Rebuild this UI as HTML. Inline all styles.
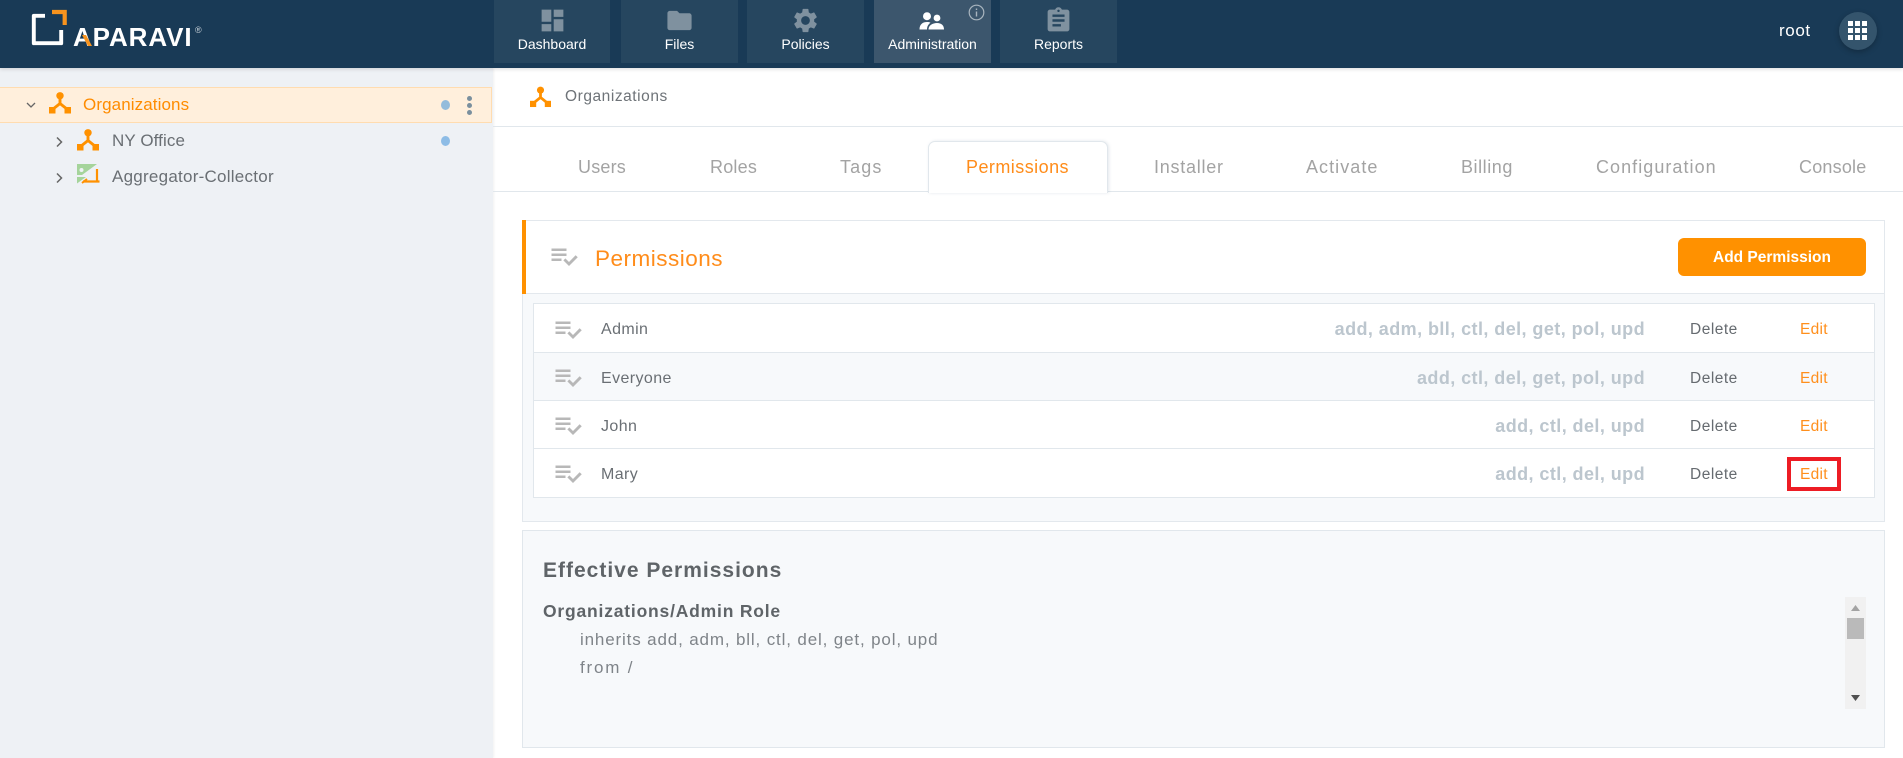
<!DOCTYPE html>
<html lang="en">
<head>
<meta charset="utf-8">
<title>Aparavi - Permissions</title>
<style>
html,body{margin:0;padding:0;width:1903px;height:758px;overflow:hidden;background:#fff;font-family:"Liberation Sans",sans-serif}
*{box-sizing:border-box}
.a{position:absolute}
.t{position:absolute;white-space:nowrap;line-height:20px;height:20px}
svg{position:absolute;display:block}
.nav{position:absolute;top:0;height:63px;background:#26465f}
.nl{position:absolute;left:0;right:0;top:34px;text-align:center;color:#fff;font-size:14px;line-height:20px}
.tab{font-size:18px;color:#a3a3a3;top:157px;letter-spacing:.2px}
.name{font-size:16px;color:#6a6f74;left:601px;letter-spacing:.4px}
.perm{font-size:18px;color:#bcc6ce;right:258px;font-weight:bold;letter-spacing:.43px}
.del{font-size:15.5px;color:#666b70;left:1690px;letter-spacing:.5px}
.edit{font-size:15.5px;color:#ff8f1c;left:1800px;letter-spacing:.3px}
</style>
</head>
<body>
<svg width="0" height="0" style="position:absolute">
<defs>
<symbol id="org" viewBox="0 0 22 22">
<circle cx="11" cy="3.800" r="3.700" fill="#ff9100"/>
<path d="M11 5v6.500M11 11.500L3.500 17.500M11 11.500L18.500 17.500" stroke="#ff9100" stroke-width="2.900" fill="none"/>
<rect x="0" y="15" width="6.500" height="6.500" fill="#ff9100"/>
<rect x="15.500" y="15" width="6.500" height="6.500" fill="#ff9100"/>
</symbol>
<symbol id="chk" viewBox="0 0 24 24">
<path fill="#b8b8b8" d="M14 10H2v2h12v-2zm0-4H2v2h12V6zM2 16h8v-2H2v2zM21.300 11.400L23 13l-7 7-4.500-4.500 1.600-1.600 2.900 2.900z"/>
</symbol>
</defs>
</svg>

<!-- header -->
<div class="a" style="left:0;top:0;width:1903px;height:68px;background:#193a56;z-index:3;box-shadow:0 1px 4px rgba(0,0,0,.15)">
  <svg style="left:30px;top:8px" width="40" height="40" viewBox="0 0 40 40">
    <path d="M15 7.800H3.800V35.200H31.200V22" fill="none" stroke="#fff" stroke-width="3.900" stroke-linejoin="round"/>
    <path d="M22 4H34.700V17" fill="none" stroke="#f7931e" stroke-width="4.200"/>
  </svg>
  <div class="t" style="left:73px;top:24px;height:26px;line-height:26px;font-size:26px;color:#fff;letter-spacing:.9px;font-weight:bold">APARAVI</div>
  <svg style="left:78px;top:35px" width="16" height="11" viewBox="0 0 16 11"><path d="M4 0L10 11H14L8 0z" fill="#f7931e"/></svg>
  <div class="t" style="left:195px;top:20px;font-size:9px;color:#c9d2d9">®</div>

  <div class="nav" style="left:494px;width:116px">
    <svg style="left:44px;top:5.500px" width="29" height="29" viewBox="0 0 24 24"><path fill="#7f919f" d="M3 13h8V3H3v10zm0 8h8v-6H3v6zm10 0h8V11h-8v10zm0-18v6h8V3h-8z"/></svg>
    <div class="nl">Dashboard</div>
  </div>
  <div class="nav" style="left:621px;width:117px">
    <svg style="left:44px;top:5.500px" width="29" height="29" viewBox="0 0 24 24"><path fill="#7f919f" d="M10 4H4c-1.100 0-1.990.9-1.990 2L2 18c0 1.100.9 2 2 2h16c1.100 0 2-.9 2-2V8c0-1.100-.9-2-2-2h-8l-2-2z"/></svg>
    <div class="nl">Files</div>
  </div>
  <div class="nav" style="left:747px;width:117px">
    <svg style="left:44px;top:5.500px" width="29" height="29" viewBox="0 0 24 24"><path fill="#7f919f" d="M19.140 12.940c.04-.3.06-.61.06-.94 0-.32-.02-.64-.07-.94l2.030-1.580c.18-.14.23-.41.12-.61l-1.920-3.320c-.12-.22-.37-.29-.59-.22l-2.390.96c-.5-.38-1.030-.7-1.620-.94l-.36-2.540c-.04-.24-.24-.41-.48-.41h-3.840c-.24 0-.43.17-.47.41l-.36 2.540c-.59.24-1.130.57-1.620.94l-2.390-.96c-.22-.08-.47 0-.59.22L2.740 8.870c-.12.21-.08.47.12.61l2.030 1.580c-.05.3-.09.63-.09.94s.02.64.07.94l-2.030 1.580c-.18.14-.23.41-.12.61l1.920 3.320c.12.22.37.29.59.22l2.390-.96c.5.38 1.030.7 1.620.94l.36 2.540c.05.24.24.41.48.41h3.840c.24 0 .44-.17.47-.41l.36-2.540c.59-.24 1.130-.56 1.620-.94l2.390.96c.22.08.47 0 .59-.22l1.920-3.320c.12-.22.07-.47-.12-.61l-2.010-1.580zM12 15.600c-1.980 0-3.600-1.620-3.600-3.600s1.620-3.600 3.600-3.600 3.600 1.620 3.600 3.600-1.620 3.600-3.600 3.600z"/></svg>
    <div class="nl">Policies</div>
  </div>
  <div class="nav" style="left:874px;width:117px;background:#3c566d">
    <svg style="left:45px;top:12px" width="26" height="18" viewBox="0 0 26 18">
      <circle cx="8" cy="4.200" r="4" fill="#fff"/>
      <circle cx="18" cy="6" r="3.400" fill="#fff"/>
      <path d="M.5 17.500C.5 12 4 10 8 10c1.500 0 2.500.2 3.500.8C9 12.500 8 15 8 17.500z" fill="#fff"/>
      <path d="M9.500 17.500c0-4 4-6.500 8.500-6.500s7 2.500 7 6.500z" fill="#fff"/>
    </svg>
    <svg style="left:94px;top:4px" width="17" height="17" viewBox="0 0 17 17">
      <circle cx="8.500" cy="8.500" r="7.300" fill="none" stroke="#a9b5bf" stroke-width="1.200"/>
      <rect x="7.800" y="7.500" width="1.400" height="5" fill="#a9b5bf"/>
      <rect x="7.800" y="4.500" width="1.400" height="1.500" fill="#a9b5bf"/>
    </svg>
    <div class="nl">Administration</div>
  </div>
  <div class="nav" style="left:1000px;width:117px">
    <svg style="left:44px;top:5.500px" width="29" height="29" viewBox="0 0 24 24"><path fill="#7f919f" d="M19 3h-4.180C14.400 1.840 13.300 1 12 1c-1.300 0-2.400.84-2.820 2H5c-1.100 0-2 .9-2 2v14c0 1.100.9 2 2 2h14c1.100 0 2-.9 2-2V5c0-1.100-.9-2-2-2zm-7 0c.55 0 1 .45 1 1s-.45 1-1 1-1-.45-1-1 .45-1 1-1zm2 14H7v-2h7v2zm3-4H7v-2h10v2zm0-4H7V7h10v2z"/></svg>
    <div class="nl">Reports</div>
  </div>

  <div class="t" style="left:1779px;top:21px;font-size:17px;color:#fff;letter-spacing:.6px">root</div>
  <div class="a" style="left:1839px;top:12px;width:38px;height:38px;border-radius:50%;background:#34546c;box-shadow:0 2px 6px rgba(0,0,0,.25)"></div>
  <svg style="left:1848px;top:21px" width="20" height="20" viewBox="0 0 20 20" fill="#fff">
    <rect x="0" y="0" width="5" height="5"/><rect x="7" y="0" width="5" height="5"/><rect x="14" y="0" width="5" height="5"/>
    <rect x="0" y="7" width="5" height="5"/><rect x="7" y="7" width="5" height="5"/><rect x="14" y="7" width="5" height="5"/>
    <rect x="0" y="14" width="5" height="5"/><rect x="7" y="14" width="5" height="5"/><rect x="14" y="14" width="5" height="5"/>
  </svg>
</div>

<!-- sidebar -->
<div class="a" style="left:0;top:68px;width:493px;height:690px;background:#eef1f5;box-shadow:1px 0 2px rgba(0,0,0,.06)"></div>
<div class="a" style="left:-2px;top:87px;width:494px;height:36px;background:#ffefdc;border:1px solid #ffdcb0"></div>
<svg style="left:26px;top:100px" width="10" height="10" viewBox="0 0 10 10"><path d="M1 3l4 4 4-4" fill="none" stroke="#666" stroke-width="1.300"/></svg>
<svg style="left:49px;top:92px" width="22" height="22"><use href="#org"/></svg>
<div class="t" style="left:83px;top:95px;font-size:17px;color:#ff8c00;letter-spacing:.1px">Organizations</div>
<div class="a" style="left:441px;top:100px;width:9px;height:10px;border-radius:50%;background:#94bcdb"></div>
<div class="a" style="left:467px;top:96px;width:5px;height:5px;border-radius:50%;background:#7a8f9e"></div>
<div class="a" style="left:467px;top:103px;width:5px;height:5px;border-radius:50%;background:#7a8f9e"></div>
<div class="a" style="left:467px;top:110px;width:5px;height:5px;border-radius:50%;background:#7a8f9e"></div>

<svg style="left:54px;top:136px" width="10" height="12" viewBox="0 0 10 12"><path d="M3 1.500l4.500 4.500L3 10.500" fill="none" stroke="#666" stroke-width="1.500"/></svg>
<svg style="left:77px;top:129px" width="22" height="22"><use href="#org"/></svg>
<div class="t" style="left:112px;top:131px;font-size:17px;color:#6a6f74;letter-spacing:.1px">NY Office</div>
<div class="a" style="left:441px;top:136px;width:9px;height:10px;border-radius:50%;background:#8dbce6"></div>

<svg style="left:54px;top:172px" width="10" height="12" viewBox="0 0 10 12"><path d="M3 1.500l4.500 4.500L3 10.500" fill="none" stroke="#666" stroke-width="1.500"/></svg>
<svg style="left:77px;top:164px" width="23" height="20" viewBox="0 0 23 20">
  <path d="M0 0H20L5 11H0z" fill="#a5d49b"/>
  <circle cx="4.500" cy="6" r="2" fill="#eef1f5"/>
  <path d="M0 13H9L0 19.500z" fill="#a5d49b"/>
  <path d="M20 5V17.500M6 17.500H22.500" stroke="#ff9100" stroke-width="2.200" fill="none"/>
  <path d="M5 19L10 15" stroke="#ff9100" stroke-width="2"/>
</svg>
<div class="t" style="left:112px;top:167px;font-size:17px;color:#6a6f74;letter-spacing:.25px">Aggregator-Collector</div>

<!-- breadcrumb -->
<svg style="left:530px;top:86px" width="21" height="22"><use href="#org"/></svg>
<div class="t" style="left:565px;top:87px;font-size:15.500px;color:#6e7378;letter-spacing:.55px">Organizations</div>
<div class="a" style="left:493px;top:126px;width:1410px;height:1px;background:#e1e7ec"></div>

<!-- tabs -->
<div class="a" style="left:493px;top:191px;width:1410px;height:1px;background:#e1e7ec"></div>
<div class="a" style="left:928px;top:141px;width:180px;height:52px;background:#fff;border:1px solid #e1e7ec;border-bottom:none;border-radius:7px 7px 0 0;box-shadow:1px 0 3px rgba(120,140,160,.2)"></div>
<div class="t tab" style="left:578px">Users</div>
<div class="t tab" style="left:710px">Roles</div>
<div class="t tab" style="left:840px;letter-spacing:1.1px">Tags</div>
<div class="t tab" style="left:966px;color:#ff8c1a;letter-spacing:.45px">Permissions</div>
<div class="t tab" style="left:1154px;letter-spacing:.75px">Installer</div>
<div class="t tab" style="left:1306px;letter-spacing:1.05px">Activate</div>
<div class="t tab" style="left:1461px;letter-spacing:.55px">Billing</div>
<div class="t tab" style="left:1596px;letter-spacing:1.05px">Configuration</div>
<div class="t tab" style="left:1799px">Console</div>

<!-- permissions panel -->
<div class="a" style="left:522px;top:220px;width:1363px;height:302px;background:#f7f9fb;border:1px solid #e3e8ed"></div>
<div class="a" style="left:522px;top:220px;width:1363px;height:74px;background:#fff;border:1px solid #e3e8ed;border-left:none"></div>
<div class="a" style="left:522px;top:220px;width:4px;height:74px;background:#ff9100"></div>
<svg style="left:549px;top:241px" width="30" height="30"><use href="#chk"/></svg>
<div class="t" style="left:595px;top:247px;height:24px;line-height:24px;font-size:22.500px;color:#ff8c1a;letter-spacing:.5px">Permissions</div>
<div class="a" style="left:1678px;top:238px;width:188px;height:38px;background:#ff9100;border-radius:6px"></div>
<div class="t" style="left:1678px;top:248px;width:188px;text-align:center;font-size:15.500px;font-weight:bold;color:#fff">Add Permission</div>

<!-- list -->
<div class="a" style="left:533px;top:303px;width:1342px;height:195px;background:#fff;border:1px solid #e1e7ec"></div>
<div class="a" style="left:534px;top:352px;width:1340px;height:49px;background:#f7f9fb;border-top:1px solid #e1e7ec;border-bottom:1px solid #e1e7ec"></div>
<div class="a" style="left:534px;top:448px;width:1340px;height:1px;background:#e1e7ec"></div>

<svg style="left:553px;top:314px" width="30" height="30"><use href="#chk"/></svg>
<svg style="left:553px;top:362px" width="30" height="30"><use href="#chk"/></svg>
<svg style="left:553px;top:410px" width="30" height="30"><use href="#chk"/></svg>
<svg style="left:553px;top:458px" width="30" height="30"><use href="#chk"/></svg>

<div class="t name" style="top:320px">Admin</div>
<div class="t name" style="top:369px">Everyone</div>
<div class="t name" style="top:417px">John</div>
<div class="t name" style="top:465px">Mary</div>

<div class="t perm" style="top:319px">add, adm, bll, ctl, del, get, pol, upd</div>
<div class="t perm" style="top:368px">add, ctl, del, get, pol, upd</div>
<div class="t perm" style="top:416px">add, ctl, del, upd</div>
<div class="t perm" style="top:464px">add, ctl, del, upd</div>

<div class="t del" style="top:320px">Delete</div>
<div class="t del" style="top:369px">Delete</div>
<div class="t del" style="top:417px">Delete</div>
<div class="t del" style="top:465px">Delete</div>

<div class="t edit" style="top:320px">Edit</div>
<div class="t edit" style="top:369px">Edit</div>
<div class="t edit" style="top:417px">Edit</div>
<div class="t edit" style="top:465px">Edit</div>
<div class="a" style="left:1787px;top:457px;width:54px;height:34px;border:4px solid #ed1c24"></div>

<!-- effective permissions -->
<div class="a" style="left:522px;top:530px;width:1363px;height:218px;background:#f7f9fb;border:1px solid #e1e7ec"></div>
<div class="t" style="left:543px;top:559px;height:24px;line-height:24px;font-size:21px;font-weight:bold;color:#5f6468;letter-spacing:1px">Effective Permissions</div>
<div class="t" style="left:543px;top:601px;font-size:17.500px;font-weight:bold;color:#5f6468;letter-spacing:.8px">Organizations/Admin Role</div>
<div class="t" style="left:580px;top:630px;font-size:17px;color:#7f8489;letter-spacing:.85px">inherits add, adm, bll, ctl, del, get, pol, upd</div>
<div class="t" style="left:580px;top:658px;font-size:17px;color:#7f8489;letter-spacing:1.8px">from /</div>

<!-- scrollbar -->
<div class="a" style="left:1845px;top:597px;width:21px;height:112px;background:#f1f1f1"></div>
<div class="a" style="left:1847px;top:618px;width:17px;height:21px;background:#bababa"></div>
<svg style="left:1845px;top:604px" width="21" height="8" viewBox="0 0 21 8"><path d="M10.500 1L15 7H6z" fill="#a3a3a3"/></svg>
<svg style="left:1845px;top:694px" width="21" height="8" viewBox="0 0 21 8"><path d="M6 1H15L10.500 7z" fill="#505050"/></svg>
</body>
</html>
